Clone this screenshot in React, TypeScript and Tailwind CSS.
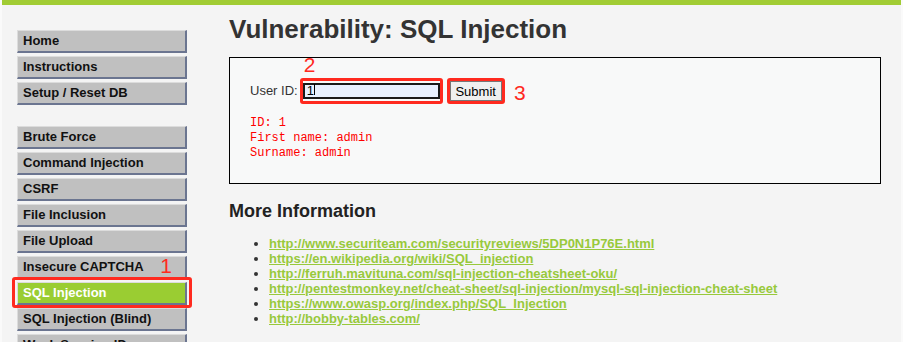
import React from 'react'

const topMenu = ['Home', 'Instructions', 'Setup / Reset DB']
const vulnMenu = [
  'Brute Force',
  'Command Injection',
  'CSRF',
  'File Inclusion',
  'File Upload',
  'Insecure CAPTCHA',
  'SQL Injection',
  'SQL Injection (Blind)',
  'Weak Session IDs',
]

const links = [
  'http://www.securiteam.com/securityreviews/5DP0N1P76E.html',
  'https://en.wikipedia.org/wiki/SQL_injection',
  'http://ferruh.mavituna.com/sql-injection-cheatsheet-oku/',
  'http://pentestmonkey.net/cheat-sheet/sql-injection/mysql-sql-injection-cheat-sheet',
  'https://www.owasp.org/index.php/SQL_Injection',
  'http://bobby-tables.com/',
]

function MenuItem({ label, selected }: { label: string; selected?: boolean }) {
  return (
    <li className="relative">
      <a
        className={
          'flex h-[23px] items-center pl-[5px] text-[13px] font-bold border-t border-l border-t-[#dcdcdc] border-l-[#dcdcdc] border-r-2 border-b-2 border-r-[#6b7590] border-b-[#6b7590] ' +
          (selected ? 'bg-[#9acd32] text-white' : 'bg-[#c0c0c0] text-[#111]')
        }
      >
        {label}
      </a>
      {selected && (
        <>
          <span className="pointer-events-none absolute -left-[5px] -right-[5px] -top-[5px] -bottom-[3px] rounded-[3px] border-[3px] border-[#ff2a1f]" />
          <span className="absolute right-[15px] -top-[27px] text-[21px] leading-none text-[#ff2a1f]">1</span>
        </>
      )}
    </li>
  )
}

export default function App() {
  return (
    <div
      className="h-[342px] w-[903px] overflow-hidden bg-[#f4f4f4] border-l-2 border-r-2 border-[#fafafa]"
      style={{ fontFamily: '"Liberation Sans", Arial, sans-serif' }}
    >
      <div className="h-[5px] bg-[#a1cc34]" />
      <div className="flex">
        <nav className="flex w-[227px] shrink-0 flex-col gap-[21px] pl-[15px] pt-[25px]">
          <ul className="flex w-[170px] flex-col gap-[3px]">
            {topMenu.map((m) => (
              <MenuItem key={m} label={m} />
            ))}
          </ul>
          <ul className="flex w-[170px] flex-col gap-[3px]">
            {vulnMenu.map((m) => (
              <MenuItem key={m} label={m} selected={m === 'SQL Injection'} />
            ))}
          </ul>
        </nav>

        <main className="flex flex-1 flex-col pr-[20px] pt-[9px]">
          <h1 className="text-[26px] font-bold leading-[30px] text-[#333]">Vulnerability: SQL Injection</h1>

          <div className="mt-[13px] flex flex-col gap-[15px] border border-black bg-[#f8f9f9] pl-[20px] pt-[23px] pb-[22px]">
            <form className="flex h-[20px] items-center gap-[5px] text-[13px] text-[#333]">
              <span>User ID:</span>
              <span className="relative">
                <input
                  readOnly
                  value="1"
                  className="h-[16px] w-[137px] border-2 border-[#1a1a1a] bg-[#e8f0fe] pl-[2px] text-[13px] text-black outline-none"
                />
                <span className="absolute left-[11px] top-[3px] h-[11px] w-px bg-black" />
                <span className="pointer-events-none absolute -inset-[3px] rounded-[3px] border-[3px] border-[#ff2a1f]" />
                <span className="absolute left-[1px] -top-[27px] text-[21px] leading-none text-[#ff2a1f]">2</span>
              </span>
              <span className="relative ml-[5px]">
                <button
                  type="button"
                  className="h-[20px] w-[52px] border border-[#767676] bg-[#efefef] text-[13px] text-black"
                >
                  Submit
                </button>
                <span className="pointer-events-none absolute -inset-[3px] rounded-[3px] border-[3px] border-[#ff2a1f]" />
                <span className="absolute -right-[24px] top-[1px] text-[21px] leading-none text-[#ff2a1f]">3</span>
              </span>
            </form>
            <pre
              className="text-[12px] leading-[15px] text-[#ff0000]"
              style={{ fontFamily: '"Liberation Mono", "Courier New", monospace' }}
            >
              {'ID: 1\nFirst name: admin\nSurname: admin'}
            </pre>
          </div>

          <h2 className="mt-[16px] text-[18px] font-bold leading-[22px] text-[#222]">More Information</h2>
          <ul className="mt-[14px] list-disc pl-[40px] text-[13px] leading-[15px] text-[#333]">
            {links.map((l) => (
              <li key={l}>
                <a className="font-bold text-[#98c93c] underline">{l}</a>
              </li>
            ))}
          </ul>
        </main>
      </div>
    </div>
  )
}
